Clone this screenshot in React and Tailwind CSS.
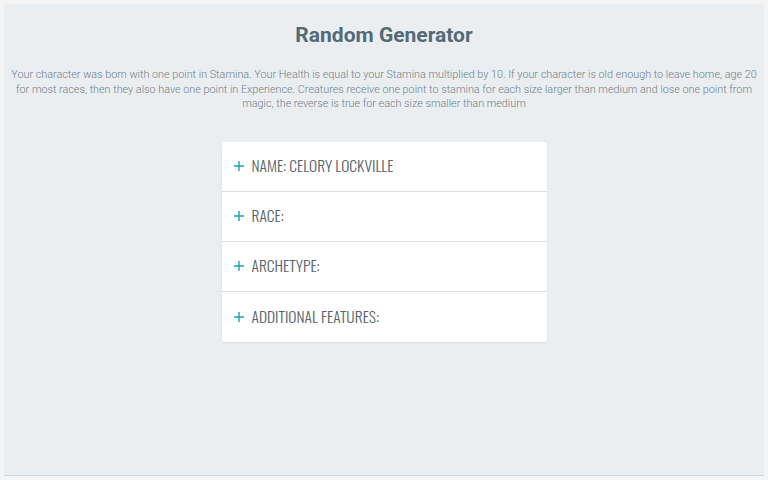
const rows = ["NAME: CELORY LOCKVILLE", "RACE:", "ARCHETYPE:", "ADDITIONAL FEATURES:"];

function Plus() {
  return (
    <svg width="10" height="10" viewBox="0 0 10 10" className="shrink-0">
      <path d="M5 0v10M0 5h10" stroke="#1aa3b2" strokeWidth="1.4" />
    </svg>
  );
}

export default function App() {
  return (
    <div className="w-[768px] h-[480px] bg-[#f4f4f4] p-[4px] font-['Roboto',sans-serif]">
      <div className="h-full bg-[#eaeef1] border-b border-[#d3d8dc] flex flex-col items-center">
        <h1 className="mt-[18px] text-[21px] leading-[26px] font-bold text-[#546a76]">Random Generator</h1>
        <p className="mt-[20px] px-[3px] text-center text-[10.8px] leading-[14.5px] font-light text-[#6f7f89]">
          Your character was born with one point in Stamina. Your Health is equal to your Stamina multiplied by 10. If your character is old enough to leave home, age 20 for most races, then they also have one point in Experience. Creatures receive one point to stamina for each size larger than medium and lose one point from magic, the reverse is true for each size smaller than medium
        </p>
        <div className="mt-[30px] w-[325px] bg-white rounded-[3px] shadow-[0_1px_2px_rgba(0,0,0,0.08)]">
          {rows.map((r, i) => (
            <div
              key={r}
              className={`h-[50px] flex items-center gap-[8px] px-[12px] ${i < rows.length - 1 ? "border-b border-[#dcdfe1]" : ""}`}
            >
              <Plus />
              <span className="font-['Oswald','Roboto_Condensed','Liberation_Sans_Narrow',sans-serif] font-light text-[15.5px] text-[#56636b]">{r}</span>
            </div>
          ))}
        </div>
      </div>
    </div>
  );
}
